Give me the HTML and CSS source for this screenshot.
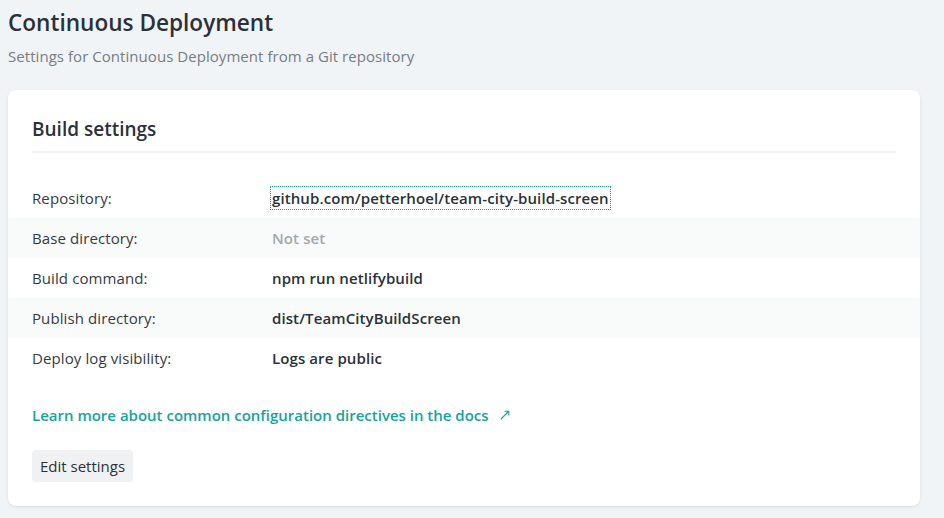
FILE: index.html
```html
<!DOCTYPE html>
<html lang="en">
<head>
<meta charset="utf-8">
<title>Continuous Deployment</title>
<link rel="stylesheet" href="styles.css">
</head>
<body>
<main class="page">
  <header class="page-header">
    <h1 class="page-title">Continuous Deployment</h1>
    <p class="page-sub">Settings for Continuous Deployment from a Git repository</p>
  </header>
  <section class="card">
    <h2 class="card-title">Build settings</h2>
    <dl class="settings">
      <div class="row">
        <dt class="label">Repository:</dt>
        <dd class="value"><a class="repo-link" href="#">github.com/petterhoel/team-city-build-screen</a></dd>
      </div>
      <div class="row shaded">
        <dt class="label">Base directory:</dt>
        <dd class="value muted">Not set</dd>
      </div>
      <div class="row">
        <dt class="label">Build command:</dt>
        <dd class="value">npm run netlifybuild</dd>
      </div>
      <div class="row shaded">
        <dt class="label">Publish directory:</dt>
        <dd class="value">dist/TeamCityBuildScreen</dd>
      </div>
      <div class="row">
        <dt class="label">Deploy log visibility:</dt>
        <dd class="value">Logs are public</dd>
      </div>
    </dl>
    <p class="docs"><a class="docs-link" href="#">Learn more about common configuration directives in the docs<svg class="ext" width="10" height="10" viewBox="0 0 10 10" aria-hidden="true"><path d="M1 9 L8.5 1.5 M4.5 1.2 H8.8 V5.5" fill="none" stroke="currentColor" stroke-width="1.1"/></svg></a></p>
    <button class="btn" type="button">Edit settings</button>
  </section>
</main>
</body>
</html>
```

FILE: styles.css
```css
* { box-sizing: border-box; }
html, body { margin: 0; padding: 0; }
body {
  background: #f1f4f7;
  font-family: "Open Sans", "Noto Sans", "Liberation Sans", sans-serif;
  color: #2d333a;
  width: 944px;
  height: 518px;
  overflow: hidden;
}
.page { padding: 6px 24px 0 8px; }
.page-header { margin-bottom: 22px; }
.page-title {
  margin: 0;
  font-size: 22.6px;
  font-weight: 600;
  line-height: 34px;
  color: #2b3138;
}
.page-sub {
  margin: 4px 0 0;
  font-size: 15px;
  line-height: 24px;
  color: #777d84;
  letter-spacing: 0.05px;
}
.card {
  background: #fff;
  border-radius: 8px;
  box-shadow: 0 1px 3px rgba(30, 40, 60, 0.12);
  padding: 24px;
}
.card-title {
  margin: 0;
  font-size: 19px;
  font-weight: 600;
  line-height: 30px;
  color: #2b3138;
  padding-bottom: 7px;
  border-bottom: 2px solid #f0f2f4;
}
.settings { margin: 25px -24px 0; padding: 0; }
.row {
  display: grid;
  grid-template-columns: 240px 1fr;
  align-items: center;
  height: 40px;
  padding: 0 24px;
  font-size: 15px;
  letter-spacing: 0.1px;
}
.row.shaded { background: #f9fafa; }
.label { margin: 0; color: #353b42; }
.value { margin: 0; font-weight: 600; color: #2b3138; }
.value.muted { color: #a4a8ac; }
.repo-link {
  color: inherit;
  text-decoration: none;
  outline: 1px dotted #15a69a;
  outline-offset: 1px;
}
.docs { margin: 25px 0 0; font-size: 15px; line-height: 24px; }
.docs-link {
  color: #14a599;
  font-weight: 600;
  text-decoration: none;
}
.ext { margin-left: 11px; vertical-align: 1px; }
.btn {
  display: block;
  margin-top: 23px;
  font: inherit;
  font-size: 15px;
  color: #2b3138;
  background: #f0f1f3;
  border: 0;
  border-radius: 4px;
  padding: 0 8px;
  height: 32px;
}
```
